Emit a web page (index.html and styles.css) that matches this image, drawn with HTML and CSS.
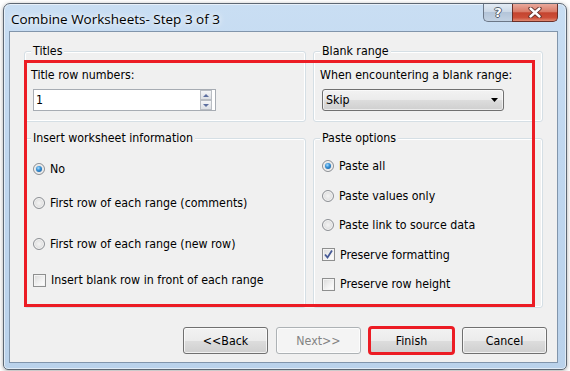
FILE: index.html
```html
<!DOCTYPE html>
<html>
<head>
<meta charset="utf-8">
<title>Combine Worksheets</title>
<link rel="stylesheet" href="styles.css">
</head>
<body>
<div class="window">
  <div class="titlebar">
    <span class="title">Combine Worksheets- Step 3 of 3</span>
    <div class="caption-btns">
      <span class="cap-btn cap-help">?</span>
      <span class="cap-btn cap-close">
        <svg width="14" height="11" viewBox="0 0 14 11">
          <path d="M2.5 1.5 L11.5 9.5 M11.5 1.5 L2.5 9.5" stroke="#5b2b25" stroke-width="4.2" stroke-linecap="round"/>
          <path d="M2.5 1.5 L11.5 9.5 M11.5 1.5 L2.5 9.5" stroke="#ffffff" stroke-width="2.4" stroke-linecap="round"/>
        </svg>
      </span>
    </div>
  </div>
  <div class="client">
    <div class="groups">
      <fieldset class="group group-top">
        <legend>Titles</legend>
        <div class="field-label">Title row numbers:</div>
        <div class="spin">
          <span class="spin-value">1</span>
          <span class="spin-btns">
            <span class="spin-btn spin-up"></span>
            <span class="spin-btn spin-down"></span>
          </span>
        </div>
      </fieldset>
      <fieldset class="group group-top">
        <legend>Blank range</legend>
        <div class="field-label">When encountering a blank range:</div>
        <div class="combo">
          <span class="combo-value">Skip</span>
          <svg class="combo-arrow" width="7" height="4" viewBox="0 0 7 4"><path d="M0 0 H7 L3.5 4 Z" fill="#000"/></svg>
        </div>
      </fieldset>
      <fieldset class="group group-bottom">
        <legend>Insert worksheet information</legend>
        <div class="opt-list opt-list-left">
          <div class="opt"><span class="radio radio-on"></span>No</div>
          <div class="opt"><span class="radio"></span>First row of each range (comments)</div>
          <div class="opt"><span class="radio"></span>First row of each range (new row)</div>
          <div class="opt"><span class="check"></span>Insert blank row in front of each range</div>
        </div>
      </fieldset>
      <fieldset class="group group-bottom">
        <legend>Paste options</legend>
        <div class="opt-list opt-list-right">
          <div class="opt"><span class="radio radio-on"></span>Paste all</div>
          <div class="opt"><span class="radio"></span>Paste values only</div>
          <div class="opt"><span class="radio"></span>Paste link to source data</div>
          <div class="opt"><span class="check check-on"><svg width="11" height="11" viewBox="0 0 11 11"><path d="M2 5.5 L4.5 8.5 L9 1.5" fill="none" stroke="#465a96" stroke-width="1.8"/></svg></span>Preserve formatting</div>
          <div class="opt"><span class="check"></span>Preserve row height</div>
        </div>
      </fieldset>
    </div>
    <div class="buttons">
      <button class="btn">&lt;&lt;Back</button>
      <button class="btn btn-disabled">Next&gt;&gt;</button>
      <button class="btn btn-finish">Finish</button>
      <button class="btn">Cancel</button>
    </div>
    <div class="highlight"></div>
  </div>
</div>
</body>
</html>
```
FILE: styles.css
```css
html, body {
  margin: 0;
  padding: 0;
}
body {
  width: 570px;
  height: 371px;
  overflow: hidden;
  background: #ffffff;
  font-family: "DejaVu Sans", "Verdana", sans-serif;
  font-stretch: condensed;
  font-size: 12.3px;
  color: #000;
}
.window {
  margin: 3px 0 0 3px;
  width: 564px;
  height: 367px;
  box-sizing: border-box;
  border: 1px solid #5d6773;
  border-radius: 7px 7px 5px 5px;
  background: linear-gradient(to bottom, #c9def3 0%, #c0d7ef 40%, #bad2eb 100%);
  padding: 0 8px 6px 5px;
  display: flex;
  flex-direction: column;
  box-shadow: 0 1px 4px rgba(0,0,0,0.35), inset 0 0 0 1px rgba(255,255,255,0.55);
}
.titlebar {
  height: 27px;
  flex: none;
  display: flex;
  justify-content: space-between;
  align-items: flex-start;
}
.title {
  margin: 6px 0 0 2px;
  line-height: 18px;
  font-family: "Segoe UI", "Open Sans", sans-serif;
  font-stretch: normal;
  font-size: 13.5px;
  color: #000;
  text-shadow: 0 0 5px rgba(255,255,255,0.95), 0 0 9px rgba(255,255,255,0.8);
}
.caption-btns {
  display: flex;
}
.cap-btn {
  height: 18px;
  box-sizing: border-box;
  display: flex;
  align-items: center;
  justify-content: center;
  border: 1px solid #6b7787;
  border-top: none;
}
.cap-help {
  width: 29px;
  border-radius: 0 0 0 5px;
  border-right: none;
  background: linear-gradient(to bottom, #e3ebf4 0%, #ccd9e7 45%, #b4c5d9 50%, #c3d2e3 100%);
  color: #fff;
  font-family: "DejaVu Sans", sans-serif;
  font-stretch: normal;
  font-weight: bold;
  font-size: 13px;
  line-height: 16px;
  text-shadow: 1px 0 0 #55606c, -1px 0 0 #55606c, 0 1px 0 #55606c, 0 -1px 0 #55606c;
}
.cap-close {
  width: 46px;
  border-color: #6a2f28;
  border-radius: 0 0 5px 0;
  background: linear-gradient(to bottom, #e9a99c 0%, #d97b68 45%, #c4442f 52%, #cc4e38 80%, #e08a72 100%);
}
.client {
  flex: 1;
  position: relative;
  border: 1px solid #8195ab;
  background: #f0f0f0;
  padding: 12px 10px 8px 14px;
  display: flex;
  flex-direction: column;
}
.groups {
  display: grid;
  grid-template-columns: 282px 230px;
  grid-template-rows: 78px 177px;
  column-gap: 7px;
  row-gap: 9px;
}
.group {
  margin: 0;
  min-width: 0;
  border: 1px solid #d5dfe5;
  border-radius: 3px;
  padding: 10px 6px 6px 6px;
  box-shadow: inset 0 0 0 1px #ffffff;
}
.group legend {
  padding: 0 2px;
  line-height: 14px;
  background: #f0f0f0;
}
.field-label {
  line-height: 14px;
  margin-bottom: 7px;
}
.spin {
  margin-left: 2px;
  width: 183px;
  height: 22px;
  box-sizing: border-box;
  border: 1px solid #a7acb3;
  background: #ffffff;
  display: flex;
  align-items: center;
  justify-content: space-between;
}
.spin-value {
  padding-left: 2px;
  line-height: 14px;
}
.spin-btns {
  display: flex;
  flex-direction: column;
  margin-right: 3px;
}
.spin-btn {
  width: 12px;
  height: 10px;
  box-sizing: border-box;
  border: 1px solid #b9bdc3;
  background: linear-gradient(to bottom, #f4f5f7, #dde0e5);
  display: flex;
  align-items: center;
  justify-content: center;
}
.spin-up::after,
.spin-down::after {
  content: "";
  width: 0;
  height: 0;
  border-left: 3px solid transparent;
  border-right: 3px solid transparent;
}
.spin-up::after {
  border-bottom: 3px solid #5d6f9f;
}
.spin-down::after {
  border-top: 3px solid #5d6f9f;
}
.combo {
  margin-left: 2px;
  width: 182px;
  height: 22px;
  box-sizing: border-box;
  border: 1px solid #707070;
  border-radius: 3px;
  background: linear-gradient(to bottom, #f2f2f2 0%, #ebebeb 50%, #dddddd 51%, #cfcfcf 100%);
  box-shadow: inset 0 0 0 1px rgba(255,255,255,0.6);
  display: flex;
  align-items: center;
  justify-content: space-between;
  padding: 0 5px 0 3px;
}
.combo-value {
  line-height: 14px;
}
.opt-list {
  display: flex;
  flex-direction: column;
}
.opt-list-left {
  padding-top: 7px;
}
.opt-list-left .opt:nth-child(2) { margin-top: 20px; }
.opt-list-left .opt:nth-child(3) { margin-top: 27px; }
.opt-list-left .opt:nth-child(4) { margin-top: 22px; }
.opt-list-right {
  padding-top: 4px;
  gap: 15.5px;
}
.opt {
  display: flex;
  align-items: center;
  height: 14px;
  line-height: 14px;
  margin-left: 2px;
  gap: 5px;
  white-space: nowrap;
}
.radio {
  width: 12px;
  height: 12px;
  box-sizing: border-box;
  border-radius: 50%;
  border: 1px solid #8d9095;
  background: radial-gradient(circle at 50% 50%, #f4f4f4 0%, #e2e2e2 55%, #cdcdcd 100%);
  box-shadow: inset 0 0 0 1px rgba(255,255,255,0.7);
  flex: none;
  display: flex;
  align-items: center;
  justify-content: center;
}
.radio-on::after {
  content: "";
  width: 6px;
  height: 6px;
  border-radius: 50%;
  background: radial-gradient(circle at 40% 35%, #a9dcff 0%, #3a93d6 40%, #0c4f92 100%);
}
.check {
  width: 13px;
  height: 13px;
  box-sizing: border-box;
  border: 1px solid #8e8f8f;
  background: linear-gradient(135deg, #d9d9d9 0%, #f3f3f3 60%, #ffffff 100%);
  box-shadow: inset 0 0 0 1px #f4f4f4;
  flex: none;
  display: flex;
  align-items: center;
  justify-content: center;
}
.buttons {
  margin-top: 19px;
  display: flex;
  justify-content: flex-end;
  gap: 8px;
}
.btn {
  width: 85px;
  height: 27px;
  box-sizing: border-box;
  margin: 0;
  padding: 0;
  border: 1px solid #707070;
  border-radius: 3px;
  background: linear-gradient(to bottom, #f2f2f2 0%, #ebebeb 50%, #dddddd 51%, #cfcfcf 100%);
  box-shadow: inset 0 0 0 1px rgba(255,255,255,0.7);
  font: inherit;
  color: #000;
}
.btn-disabled {
  border-color: #adb2b5;
  background: #f4f4f4;
  color: #838383;
}
.btn-finish {
  outline: 3px solid #ec1c24;
  outline-offset: -2px;
}
.highlight {
  position: absolute;
  left: 14px;
  top: 28px;
  width: 511px;
  height: 247px;
  box-sizing: border-box;
  border: 3px solid #ec1c24;
  pointer-events: none;
}
```
